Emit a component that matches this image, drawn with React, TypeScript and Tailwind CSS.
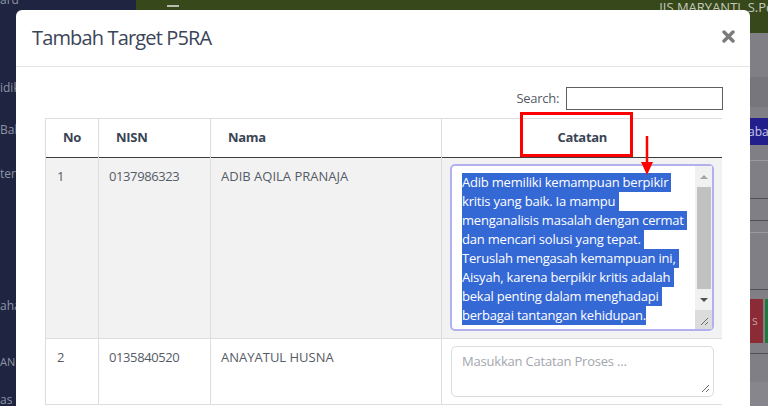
import React from "react";

const noteLines = [
  "Adib memiliki kemampuan berpikir ",
  "kritis yang baik. Ia mampu ",
  "menganalisis masalah dengan cermat ",
  "dan mencari solusi yang tepat. ",
  "Teruslah mengasah kemampuan ini, ",
  "Aisyah, karena berpikir kritis adalah ",
  "bekal penting dalam menghadapi ",
  "berbagai tantangan kehidupan.",
];

function ResizeGrip() {
  return (
    <svg width="9" height="9" viewBox="0 0 9 9" className="absolute right-[3px] bottom-[3px]">
      <path d="M8 1 L1 8 M8 5 L5 8" stroke="#6b6b6b" strokeWidth="1" fill="none" />
    </svg>
  );
}

function Backdrop() {
  return (
    <div className="flex h-full">
      {/* sidebar, dimmed */}
      <aside className="w-[136px] bg-[#1f2440] text-[12px] text-[#8e93a4] flex flex-col">
        <div className="h-[8px] -mt-[8px] leading-[16px]">ard</div>
        <div className="mt-[80px] leading-[16px]">idik</div>
        <div className="mt-[26px] leading-[16px]">Bah</div>
        <div className="mt-[28px] leading-[16px]">ter</div>
        <div className="mt-[116px] leading-[16px]">aha</div>
        <div className="mt-[40px] leading-[16px] text-[11px]">AN</div>
        <div className="mt-[22px] leading-[16px]">as</div>
      </aside>
      <main className="flex-1 flex flex-col">
        <header className="h-[33px] bg-[#37481a] flex items-start justify-between pl-[31px] pr-0">
          <div className="mt-[5px] w-[12px] h-[2px] bg-[#b9bdb0]" />
          <div className="text-[13px] leading-[14px] text-[#c4c8bc] whitespace-nowrap -mr-[6px]">IIS MARYANTI, S.Pd</div>
        </header>
        <div className="flex-1 bg-[#7f7f85] flex justify-end">
          <div className="w-[60px] flex flex-col">
            <div className="h-[44px]" />
            <div className="h-[30px] bg-[#76767c]" />
            <div className="h-[11px]" />
            <div className="h-[27px] bg-[#221e8c] text-[12px] leading-[27px] text-[#c9c8e6] pl-[40px]">abah</div>
            <div className="h-[16px] border-b border-[#9a9aa0]" />
            <div className="h-[38px] border-b border-[#515156]" />
            <div className="h-[22px] border-b border-[#515156]" />
            <div className="h-[12px] border-b border-[#9a9aa0]" />
            <div className="h-[57px] border-b border-[#515156]" />
            <div className="h-[9px]" />
            <div className="h-[44px] flex gap-[2px] pl-[42px]">
              <div className="w-[13px] bg-[#8b2b36] text-[12px] text-[#c69aa0] leading-[44px] pl-[2px]">s</div>
              <div className="flex-1 bg-[#1f7a3e]" />
            </div>
            <div className="h-[11px] border-b border-[#515156]" />
            <div className="h-[28px]" />
            <div className="flex-1 bg-[#86868c]" />
          </div>
        </div>
      </main>
    </div>
  );
}

export default function App() {
  return (
    <div className="relative w-[768px] h-[406px] overflow-hidden font-['Open_Sans','Noto_Sans',sans-serif]">
      <Backdrop />

      {/* modal */}
      <div className="absolute left-[16px] top-[10px] w-[734px] h-[440px] bg-white rounded-t-[6px]">
        <div className="h-[57px] flex items-center justify-between pl-[16px] pr-[15px] border-b border-[#e5e5e5]">
          <h4 className="text-[20px] font-medium text-[#3b4558] tracking-[-0.85px]">Tambah Target P5RA</h4>
          <svg width="13" height="13" viewBox="0 0 13 13" className="-mt-[4px]">
            <path d="M2 2 L11 11 M11 2 L2 11" stroke="#7b7b7b" strokeWidth="3.4" strokeLinecap="round" />
          </svg>
        </div>

        <div className="pt-[20px]">
          <div className="flex justify-end items-center gap-[7px] pr-[27px] h-[23px]">
            <label className="text-[13px] text-[#555b66] tracking-[-0.3px]">Search:</label>
            <input className="w-[157px] h-[23px] border border-[#5f5f5f] outline-none" />
          </div>

          <div className="mt-[8px] ml-[29px] w-[677px] overflow-hidden">
            <table className="w-[677px] border-collapse text-[13px] text-[#555b66] table-fixed">
              <colgroup>
                <col className="w-[53px]" />
                <col className="w-[112px]" />
                <col className="w-[231px]" />
                <col className="w-[281px]" />
              </colgroup>
              <thead>
                <tr className="h-[39px] border-t border-[#dddddd] border-b border-b-[#3c3c3c] font-bold text-[#3a4455] tracking-[-0.3px]">
                  <th className="pl-[17px] text-left border-l border-[#dddddd]">No</th>
                  <th className="pl-[17px] text-left border-l border-[#dddddd]">NISN</th>
                  <th className="pl-[17px] text-left border-l border-[#dddddd]">Nama</th>
                  <th className="px-[18px] text-center border-l border-[#dddddd]">Catatan</th>
                </tr>
              </thead>
              <tbody>
                <tr className="bg-[#f2f2f2] border-b border-[#dddddd] align-top">
                  <td className="pl-[11px] pt-[8px] leading-[20px] border-l border-[#dddddd]">1</td>
                  <td className="pl-[10px] pt-[8px] leading-[20px] border-l border-[#dddddd] tracking-[-0.4px]">0137986323</td>
                  <td className="pl-[10px] pt-[8px] leading-[20px] border-l border-[#dddddd]">ADIB AQILA PRANAJA</td>
                  <td className="pl-[8px] pt-[6px] pb-[7px] border-l border-[#dddddd]">
                    <div className="relative w-[264px] h-[167px] bg-white border-2 border-[#b3b0ef] rounded-[5px] pl-[10px] pt-[7px] tracking-[-0.2px]">
                      {noteLines.map((line) => (
                        <div key={line} className="h-[19px]">
                          <span className="inline-block whitespace-pre leading-[19px] bg-[#3468d5] text-white">{line}</span>
                        </div>
                      ))}
                      {/* scrollbar */}
                      <div className="absolute right-0 top-0 w-[17px] h-[163px] bg-[#f1f1f1] flex flex-col items-center">
                        <div className="h-[21px] flex items-center justify-center">
                          <div className="w-0 h-0 border-x-[4px] border-x-transparent border-b-[4px] border-b-[#a3a3a3]" />
                        </div>
                        <div className="w-[14px] h-[102px] bg-[#c1c1c1]" />
                        <div className="h-[21px] flex items-center justify-center">
                          <div className="w-0 h-0 border-x-[4px] border-x-transparent border-t-[4px] border-t-[#505050]" />
                        </div>
                        <div className="flex-1 w-full bg-[#dcdcdc]" />
                      </div>
                      <ResizeGrip />
                    </div>
                  </td>
                </tr>
                <tr className="bg-white border-b border-[#dddddd] align-top">
                  <td className="pl-[11px] pt-[8px] leading-[20px] border-l border-[#dddddd]">2</td>
                  <td className="pl-[10px] pt-[8px] leading-[20px] border-l border-[#dddddd] tracking-[-0.4px]">0135840520</td>
                  <td className="pl-[10px] pt-[8px] leading-[20px] border-l border-[#dddddd]">ANAYATUL HUSNA</td>
                  <td className="pl-[9px] pt-[7px] pb-[7px] border-l border-[#dddddd]">
                    <div className="relative w-[263px] h-[51px] border border-[#dcdcdc] rounded-[5px] pl-[10px] pt-[5px] leading-[19px] text-[#a3a6ad] tracking-[-0.2px]">
                      Masukkan Catatan Proses ...
                      <ResizeGrip />
                    </div>
                  </td>
                </tr>
              </tbody>
            </table>
          </div>
        </div>
      </div>

      {/* annotation: red box and arrow */}
      <div className="absolute left-[520px] top-[112px] w-[113px] h-[45px] border-[3px] border-[#ff0000]" />
      <svg className="absolute left-[640px] top-[136px]" width="14" height="40" viewBox="0 0 14 40">
        <path d="M7 0 L7 28" stroke="#ff0000" strokeWidth="2.5" />
        <path d="M1 26 L13 26 L7 39 Z" fill="#ff0000" />
      </svg>
    </div>
  );
}
